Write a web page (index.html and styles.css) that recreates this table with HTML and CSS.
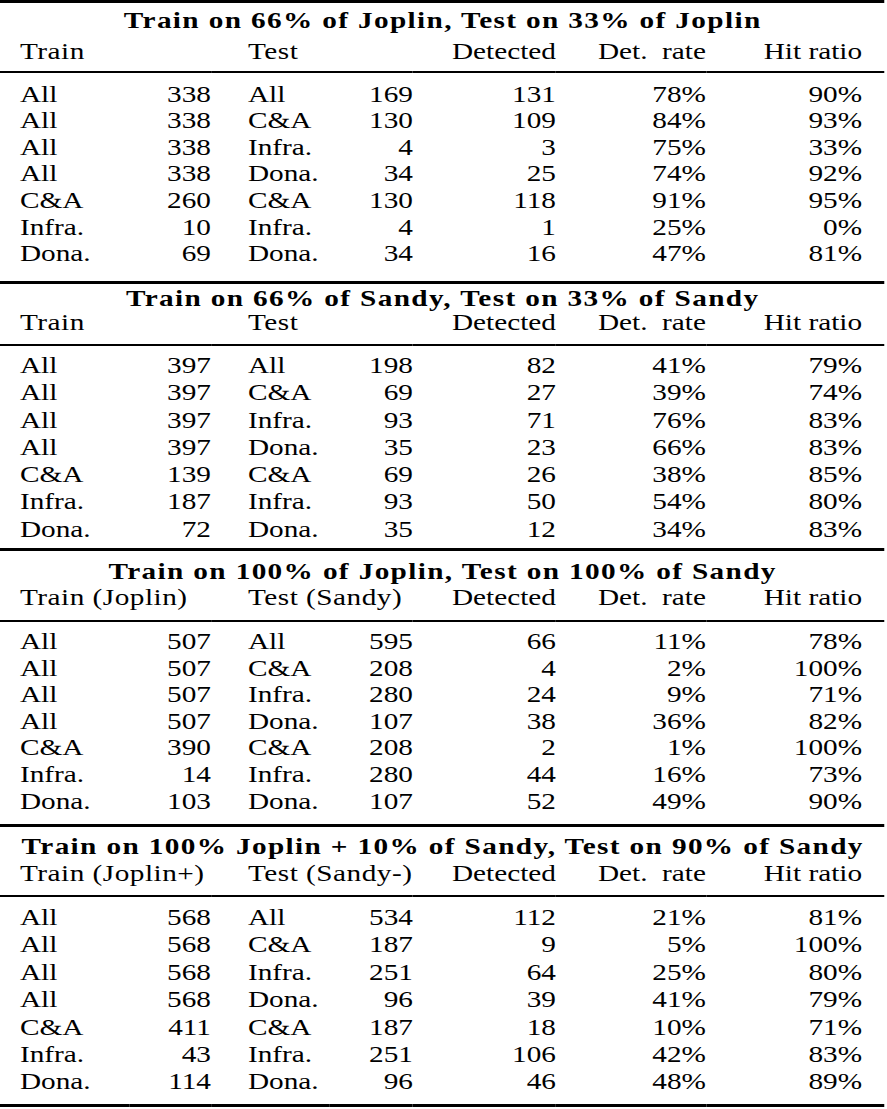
FILE: index.html
```html
<!DOCTYPE html>
<html lang="en">
<head>
<meta charset="utf-8">
<title>Detection results</title>
<link rel="stylesheet" href="styles.css">
</head>
<body>
<div class="sheet">
<table class="results">
  <colgroup>
    <col class="c-train"><col class="c-trainn"><col class="c-test"><col class="c-testn"><col class="c-det"><col class="c-rate"><col class="c-hit">
  </colgroup>

  <tbody class="sec s1">
    <tr class="title"><th colspan="7">Train on 66% of Joplin, Test on 33% of Joplin</th></tr>
    <tr class="head"><th colspan="2" class="l">Train</th><th colspan="2" class="l lt">Test</th><th>Detected</th><th>Det.&nbsp; rate</th><th class="rh">Hit ratio</th></tr>
    <tr class="first"><td class="lab">All</td><td>338</td><td class="lab lt">All</td><td>169</td><td>131</td><td>78%</td><td class="rh">90%</td></tr>
    <tr><td class="lab">All</td><td>338</td><td class="lab lt">C&amp;A</td><td>130</td><td>109</td><td>84%</td><td class="rh">93%</td></tr>
    <tr><td class="lab">All</td><td>338</td><td class="lab lt">Infra.</td><td>4</td><td>3</td><td>75%</td><td class="rh">33%</td></tr>
    <tr><td class="lab">All</td><td>338</td><td class="lab lt">Dona.</td><td>34</td><td>25</td><td>74%</td><td class="rh">92%</td></tr>
    <tr><td class="lab">C&amp;A</td><td>260</td><td class="lab lt">C&amp;A</td><td>130</td><td>118</td><td>91%</td><td class="rh">95%</td></tr>
    <tr><td class="lab">Infra.</td><td>10</td><td class="lab lt">Infra.</td><td>4</td><td>1</td><td>25%</td><td class="rh">0%</td></tr>
    <tr class="last"><td class="lab">Dona.</td><td>69</td><td class="lab lt">Dona.</td><td>34</td><td>16</td><td>47%</td><td class="rh">81%</td></tr>
  </tbody>

  <tbody class="sec s2">
    <tr class="title"><th colspan="7">Train on 66% of Sandy, Test on 33% of Sandy</th></tr>
    <tr class="head"><th colspan="2" class="l">Train</th><th colspan="2" class="l lt">Test</th><th>Detected</th><th>Det.&nbsp; rate</th><th class="rh">Hit ratio</th></tr>
    <tr class="first"><td class="lab">All</td><td>397</td><td class="lab lt">All</td><td>198</td><td>82</td><td>41%</td><td class="rh">79%</td></tr>
    <tr><td class="lab">All</td><td>397</td><td class="lab lt">C&amp;A</td><td>69</td><td>27</td><td>39%</td><td class="rh">74%</td></tr>
    <tr><td class="lab">All</td><td>397</td><td class="lab lt">Infra.</td><td>93</td><td>71</td><td>76%</td><td class="rh">83%</td></tr>
    <tr><td class="lab">All</td><td>397</td><td class="lab lt">Dona.</td><td>35</td><td>23</td><td>66%</td><td class="rh">83%</td></tr>
    <tr><td class="lab">C&amp;A</td><td>139</td><td class="lab lt">C&amp;A</td><td>69</td><td>26</td><td>38%</td><td class="rh">85%</td></tr>
    <tr><td class="lab">Infra.</td><td>187</td><td class="lab lt">Infra.</td><td>93</td><td>50</td><td>54%</td><td class="rh">80%</td></tr>
    <tr class="last"><td class="lab">Dona.</td><td>72</td><td class="lab lt">Dona.</td><td>35</td><td>12</td><td>34%</td><td class="rh">83%</td></tr>
  </tbody>

  <tbody class="sec s3">
    <tr class="title"><th colspan="7">Train on 100% of Joplin, Test on 100% of Sandy</th></tr>
    <tr class="head"><th colspan="2" class="l">Train (Joplin)</th><th colspan="2" class="l lt">Test (Sandy)</th><th>Detected</th><th>Det.&nbsp; rate</th><th class="rh">Hit ratio</th></tr>
    <tr class="first"><td class="lab">All</td><td>507</td><td class="lab lt">All</td><td>595</td><td>66</td><td>11%</td><td class="rh">78%</td></tr>
    <tr><td class="lab">All</td><td>507</td><td class="lab lt">C&amp;A</td><td>208</td><td>4</td><td>2%</td><td class="rh">100%</td></tr>
    <tr><td class="lab">All</td><td>507</td><td class="lab lt">Infra.</td><td>280</td><td>24</td><td>9%</td><td class="rh">71%</td></tr>
    <tr><td class="lab">All</td><td>507</td><td class="lab lt">Dona.</td><td>107</td><td>38</td><td>36%</td><td class="rh">82%</td></tr>
    <tr><td class="lab">C&amp;A</td><td>390</td><td class="lab lt">C&amp;A</td><td>208</td><td>2</td><td>1%</td><td class="rh">100%</td></tr>
    <tr><td class="lab">Infra.</td><td>14</td><td class="lab lt">Infra.</td><td>280</td><td>44</td><td>16%</td><td class="rh">73%</td></tr>
    <tr class="last"><td class="lab">Dona.</td><td>103</td><td class="lab lt">Dona.</td><td>107</td><td>52</td><td>49%</td><td class="rh">90%</td></tr>
  </tbody>

  <tbody class="sec s4">
    <tr class="title"><th colspan="7">Train on 100% Joplin + 10% of Sandy, Test on 90% of Sandy</th></tr>
    <tr class="head"><th colspan="2" class="l">Train (Joplin+)</th><th colspan="2" class="l lt">Test (Sandy-)</th><th>Detected</th><th>Det.&nbsp; rate</th><th class="rh">Hit ratio</th></tr>
    <tr class="first"><td class="lab">All</td><td>568</td><td class="lab lt">All</td><td>534</td><td>112</td><td>21%</td><td class="rh">81%</td></tr>
    <tr><td class="lab">All</td><td>568</td><td class="lab lt">C&amp;A</td><td>187</td><td>9</td><td>5%</td><td class="rh">100%</td></tr>
    <tr><td class="lab">All</td><td>568</td><td class="lab lt">Infra.</td><td>251</td><td>64</td><td>25%</td><td class="rh">80%</td></tr>
    <tr><td class="lab">All</td><td>568</td><td class="lab lt">Dona.</td><td>96</td><td>39</td><td>41%</td><td class="rh">79%</td></tr>
    <tr><td class="lab">C&amp;A</td><td>411</td><td class="lab lt">C&amp;A</td><td>187</td><td>18</td><td>10%</td><td class="rh">71%</td></tr>
    <tr><td class="lab">Infra.</td><td>43</td><td class="lab lt">Infra.</td><td>251</td><td>106</td><td>42%</td><td class="rh">83%</td></tr>
    <tr class="last"><td class="lab">Dona.</td><td>114</td><td class="lab lt">Dona.</td><td>96</td><td>46</td><td>48%</td><td class="rh">89%</td></tr>
  </tbody>
</table>
</div>
</body>
</html>
```

FILE: styles.css
```css
html, body {
  margin: 0;
  padding: 0;
  background: #ffffff;
}

/* The table is typeset in a Times-metric face and widened to the
   proportions of the original Computer Modern rendering. */
.sheet {
  --sx: 1.235;
  width: calc(884px / var(--sx));
  transform: scaleX(var(--sx));
  transform-origin: 0 0;
}

.results {
  width: 100%;
  table-layout: fixed;
  border-collapse: separate;
  border-spacing: 0;
  font-family: "Liberation Serif", "Times New Roman", serif;
  font-size: 23.7px;
  color: #000000;
}

.c-train  { width: calc(130px / var(--sx)); }
.c-trainn { width: calc(81px / var(--sx)); }
.c-test   { width: calc(119px / var(--sx)); }
.c-testn  { width: calc(83px / var(--sx)); }
.c-det    { width: calc(143px / var(--sx)); }
.c-rate   { width: calc(150px / var(--sx)); }
.c-hit    { width: calc(178px / var(--sx)); }

.results th,
.results td {
  padding: 0;
  white-space: nowrap;
  font-weight: normal;
  text-align: right;
  vertical-align: top;
}

.results .l,
.results .lab {
  text-align: left;
  padding-left: calc(20px / var(--sx));
}

.results .head .l {
  letter-spacing: 0.4px;
}

.results .lt {
  padding-left: calc(37px / var(--sx));
}

.results .rh {
  padding-right: calc(22px / var(--sx));
}

/* section spacing, per block */
.s1 { --tp: 7px;   --hp: 11px;  --hb: 10.3px; --fp: 7.4px; --lp: 13.9px; --row: 26.6px; }
.s2 { --tp: 4px;   --hp: 4px;   --hb: 11.8px; --fp: 6.4px; --lp: 5px;    --row: 27.3px; }
.s3 { --tp: 9.5px; --hp: 6px;   --hb: 13.8px; --fp: 5.7px; --lp: 10.1px; --row: 26.6px; }
.s4 { --tp: 9px;   --hp: 6.7px; --hb: 12.1px; --fp: 7px;   --lp: 8.2px;  --row: 27.4px; }

.sec .title th {
  border-top: 3px solid #000000;
  padding-top: var(--tp);
  padding-left: 1.1px;
  line-height: 20px;
  font-weight: bold;
  letter-spacing: 1.1px;
  text-align: center;
}

.sec .head th {
  padding-top: var(--hp);
  padding-bottom: var(--hb);
  line-height: 20px;
  border-bottom: 2px solid #000000;
}

.sec td {
  line-height: var(--row);
}

.sec tr.first td {
  padding-top: var(--fp);
}

.sec tr.last td {
  padding-bottom: var(--lp);
}

.s4 tr.last td {
  border-bottom: 3px solid #000000;
}
```
